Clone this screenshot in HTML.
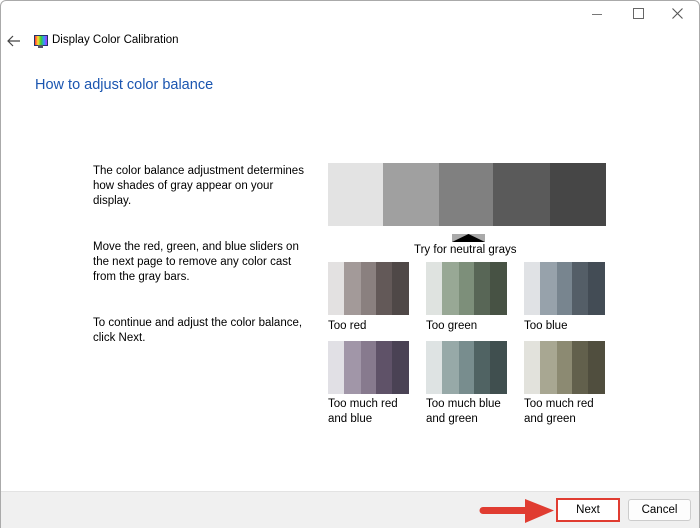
<!DOCTYPE html><html><head><style>
body{margin:0;width:700px;height:528px;overflow:hidden;background:#fff;font-family:"Segoe UI","Liberation Sans",sans-serif;position:relative;color:#000}
.a{position:absolute}
.t{font-size:11.5px;line-height:15px}
.sw{position:absolute;height:53px;display:flex}
.sw div{height:100%}
</style></head><body>
<div class="a" style="left:0;top:0;width:698px;height:526px;border:1px solid #aaa;border-radius:6px 6px 0 0"></div>
<div class="a" style="left:592px;top:14px;width:10px;height:1px;background:#777"></div>
<div class="a" style="left:633px;top:8px;width:9px;height:9px;border:1px solid #666"></div>
<svg class="a" style="left:672px;top:8px" width="11" height="11"><path d="M0.5 0.5L10.5 10.5M10.5 0.5L0.5 10.5" stroke="#555" stroke-width="1.1"/></svg>
<svg class="a" style="left:7px;top:35px" width="14" height="12"><path d="M13 6H1M6 1L1 6L6 11" stroke="#444" stroke-width="1.2" fill="none"/></svg>
<div class="a" style="left:34px;top:35px;width:12px;height:9px;background:linear-gradient(90deg,#f33,#fd3,#3c3,#39f,#a3f);border:1px solid #236"></div>
<div class="a" style="left:38px;top:45px;width:5px;height:3px;background:#556"></div>
<div class="a" style="left:52px;top:34px;font-size:11.5px">Display Color Calibration</div>
<div class="a" style="left:35px;top:77px;font-size:14.5px;color:#1a55b0">How to adjust color balance</div>
<div class="a t" style="left:93px;top:164px;width:218px">The color balance adjustment determines how shades of gray appear on your display.</div>
<div class="a t" style="left:93px;top:240px;width:218px">Move the red, green, and blue sliders on the next page to remove any color cast from the gray bars.</div>
<div class="a t" style="left:93px;top:316px;width:218px">To continue and adjust the color balance, click Next.</div>
<div class="sw" style="left:328px;top:163px;height:63px"><div style="width:55px;background:#e3e3e3"></div><div style="width:56px;background:#a0a0a0"></div><div style="width:54px;background:#808080"></div><div style="width:57px;background:#5a5a5a"></div><div style="width:56px;background:#464646"></div></div>
<div class="a" style="left:452px;top:234px;width:33px;height:8px;background:#aaa"></div>
<svg class="a" style="left:452px;top:234px" width="33" height="8"><path d="M0 8L16.5 0L33 8Z" fill="#000"/></svg>
<div class="a t" style="left:414px;top:243px">Try for neutral grays</div>
<div class="sw" style="left:328px;top:262px"><div style="width:16px;background:#e3e1e1"></div><div style="width:17px;background:#a39a99"></div><div style="width:15px;background:#8a807f"></div><div style="width:16px;background:#635958"></div><div style="width:17px;background:#4f4847"></div></div>
<div class="sw" style="left:426px;top:262px"><div style="width:16px;background:#dfe3e0"></div><div style="width:17px;background:#98a895"></div><div style="width:15px;background:#7d8f7a"></div><div style="width:16px;background:#586656"></div><div style="width:17px;background:#475244"></div></div>
<div class="sw" style="left:524px;top:262px"><div style="width:16px;background:#e0e2e5"></div><div style="width:17px;background:#97a2ab"></div><div style="width:15px;background:#78858f"></div><div style="width:16px;background:#545e67"></div><div style="width:17px;background:#434c55"></div></div>
<div class="a t" style="left:328px;top:319px">Too red</div>
<div class="a t" style="left:426px;top:319px">Too green</div>
<div class="a t" style="left:524px;top:319px">Too blue</div>
<div class="sw" style="left:328px;top:341px"><div style="width:16px;background:#e1e0e5"></div><div style="width:17px;background:#a196a8"></div><div style="width:15px;background:#877a8e"></div><div style="width:16px;background:#5f5268"></div><div style="width:17px;background:#4a4254"></div></div>
<div class="sw" style="left:426px;top:341px"><div style="width:16px;background:#dee3e3"></div><div style="width:17px;background:#97a9a8"></div><div style="width:15px;background:#788d8e"></div><div style="width:16px;background:#506363"></div><div style="width:17px;background:#404f4f"></div></div>
<div class="sw" style="left:524px;top:341px"><div style="width:16px;background:#e2e2dc"></div><div style="width:17px;background:#a8a792"></div><div style="width:15px;background:#8c8a72"></div><div style="width:16px;background:#62604c"></div><div style="width:17px;background:#504e3e"></div></div>
<div class="a t" style="left:328px;top:397px;width:90px">Too much red and blue</div>
<div class="a t" style="left:426px;top:397px;width:90px">Too much blue and green</div>
<div class="a t" style="left:524px;top:397px;width:90px">Too much red and green</div>
<div class="a" style="left:1px;top:491px;width:698px;height:36px;background:#f0f0f0;border-top:1px solid #e3e3e3"></div>
<svg class="a" style="left:478px;top:497px" width="78" height="28"><path d="M5 13.5H50" stroke="#e03c31" stroke-width="7" stroke-linecap="round"/><path d="M47 2L76 13.5L47 26Z" fill="#e03c31"/></svg>
<div class="a" style="left:556px;top:498px;width:60px;height:20px;border:2px solid #e03c31;background:#fff;font-size:11.5px;text-align:center;line-height:20px">Next</div>
<div class="a" style="left:628px;top:499px;width:61px;height:20px;border:1px solid #ccc;border-radius:3px;background:#fdfdfd;font-size:11.5px;text-align:center;line-height:20px">Cancel</div>
</body></html>
